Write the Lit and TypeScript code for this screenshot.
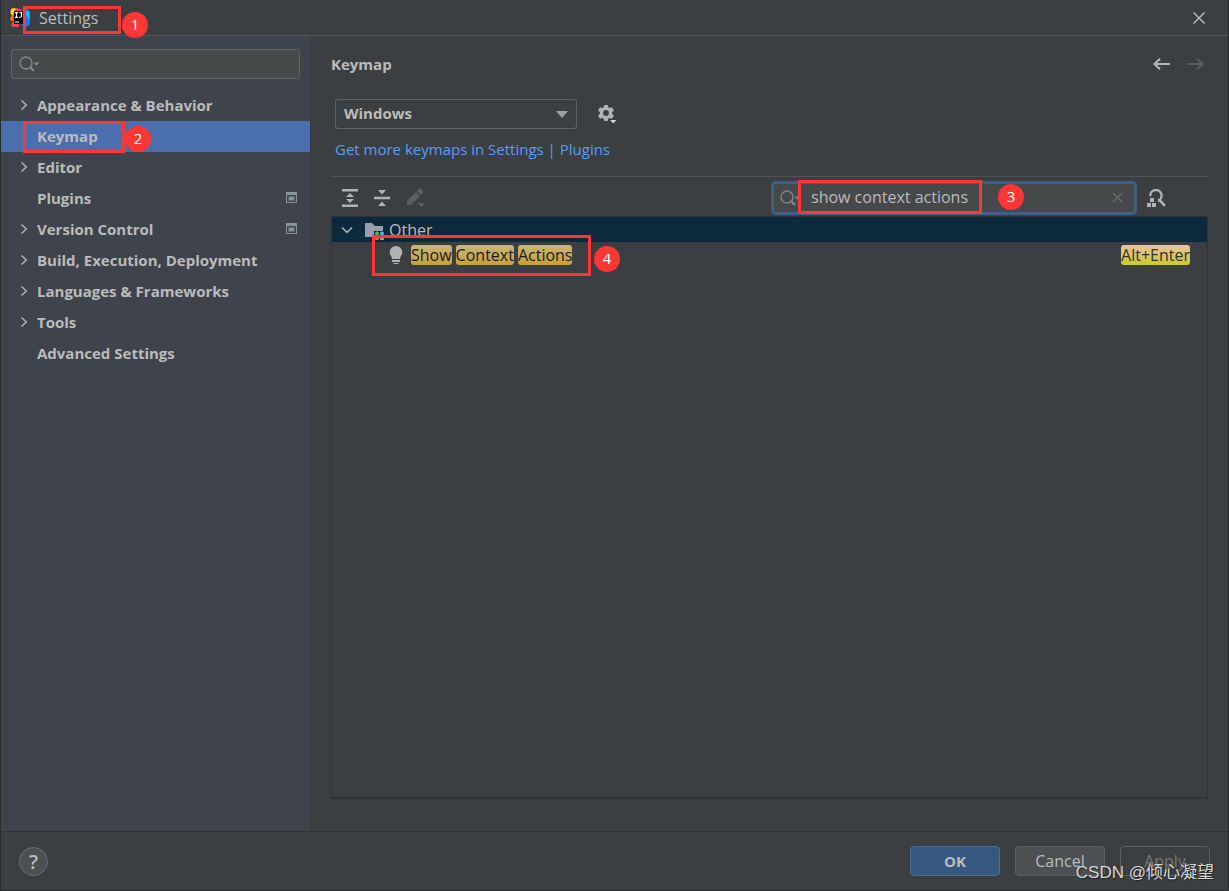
import { LitElement, html, svg, css, nothing } from "lit";
import { customElement, property, state } from "lit/decorators.js";

interface Section {
  label: string;
  expandable?: boolean;
  projectLevel?: boolean;
}

const SECTIONS: Section[] = [
  { label: "Appearance & Behavior", expandable: true },
  { label: "Keymap" },
  { label: "Editor", expandable: true },
  { label: "Plugins", projectLevel: true },
  { label: "Version Control", expandable: true, projectLevel: true },
  { label: "Build, Execution, Deployment", expandable: true },
  { label: "Languages & Frameworks", expandable: true },
  { label: "Tools", expandable: true },
  { label: "Advanced Settings" },
];

const ICONS = {
  logo: {
    w: 20,
    h: 20,
    body: svg`
      <path d="M1 1L6 0L11 2L8 19L1 18L3 14L0 11L2 7L0 5Z" fill="#fc801d"/>
      <path d="M3 5L7 0L13 2L9 19L2 18Z" fill="#fe2857" opacity=".8"/>
      <path d="M12 4L17 1L20 4V14L19 18L14 19L11 16Z" fill="#087cfa"/>
      <path d="M15 5L18 2L20 6L19 12Z" fill="#07c3f2"/>
      <path d="M1 1L5 0L3 8L1 6Z" fill="#ffd24a"/>
      <rect x="4" y="3" width="10" height="13" fill="#0b0508"/>
      <path d="M5 4.600H8M6.500 5V9.400M5 9.400H8M9.500 4.600H11.500V8.300Q11.500 9.400 9.200 9.400M5 14H9" stroke="#fff" stroke-width="1.200" fill="none"/>`,
  },
  close: { w: 12, h: 12, body: svg`<path d="M.5.5L11.500 11.500M11.500.5L.5 11.500" stroke="#c4c5c6" stroke-width="1.200" fill="none"/>` },
  search: {
    w: 21,
    h: 16,
    body: svg`
      <circle cx="7" cy="7" r="6" fill="none" stroke="#7c878f" stroke-width="1.400"/>
      <path d="M11 11L15 15" stroke="#7c878f" stroke-width="2.200"/>
      <path d="M14.500 6.500H20.500L17.500 9.800Z" fill="#7c878f"/>`,
  },
  right: { w: 8, h: 12, body: svg`<path d="M1.500 1.500L6.300 6L1.500 10.500" stroke="#adafb1" stroke-width="1.600" fill="none"/>` },
  down: { w: 12, h: 8, body: svg`<path d="M1 1.500L6 6.300L11 1.500" stroke="#adafb1" stroke-width="1.600" fill="none"/>` },
  project: {
    w: 11,
    h: 11,
    body: svg`
      <path d="M0 0H11V11H0ZM1 3V10H10V3Z" fill="#87939a" fill-rule="evenodd"/>
      <rect x="2" y="4" width="7" height="5" fill="#5b646c"/>
      <rect x="3" y="5" width="5" height="3" fill="#87939a"/>`,
  },
  back: { w: 17, h: 12, body: svg`<path d="M17 6H2M7 .8L1.600 6L7 11.200" stroke="#b4b6b8" stroke-width="2.200" fill="none"/>` },
  forward: { w: 17, h: 12, body: svg`<path d="M0 6H15M10 .8L15.400 6L10 11.200" stroke="#5b5d5f" stroke-width="2.200" fill="none"/>` },
  gear: {
    w: 19,
    h: 20,
    body: svg`
      <path fill="#afb1b3" fill-rule="evenodd" d="M6.200 1H9.800L10.300 3.300L11.600 4L14 3.300L15.900 6.500L14.100 8.200V9.800L15.900 11.500L14 14.700L11.600 14L10.300 14.700L9.800 17H6.200L5.700 14.700L4.400 14L2 14.700L.1 11.500L1.900 9.800V8.200L.1 6.500L2 3.300L4.400 4L5.700 3.300ZM8 6.100A2.900 2.900 0 1 0 8 11.900A2.900 2.900 0 1 0 8 6.100Z"/>
      <path d="M10.500 15H19V17L15 20L10.500 16Z" fill="#3c3f41"/>
      <path d="M12 16H18.500L15.250 19.500Z" fill="#d0d2d3"/>`,
  },
  expandAll: {
    w: 16,
    h: 18,
    body: svg`<path fill="#afb1b3" d="M0 0H16V2.500H0ZM0 15.500H16V18H0ZM8 4L12 8H4ZM4 10H12L8 14Z"/>`,
  },
  collapseAll: {
    w: 16,
    h: 16,
    body: svg`<path fill="#afb1b3" d="M0 6.800H16V9.200H0ZM4 0H12L8 4.500ZM8 11.500L12 16H4Z"/>`,
  },
  edit: {
    w: 19,
    h: 19,
    body: svg`
      <path fill="#5c5f61" d="M1 13L10 4L14 8L5 17H1ZM11 3L13 1Q14 .2 15 1L17 3Q17.800 4 17 5L15 7Z"/>
      <path fill="#5c5f61" d="M11.500 15H19L15.250 19Z"/>`,
  },
  clear: { w: 11, h: 11, body: svg`<path d="M.8.8L10.200 10.200M10.200.8L.8 10.200" stroke="#6e7375" stroke-width="1.200" fill="none"/>` },
  findShortcut: {
    w: 19,
    h: 18,
    body: svg`
      <path d="M3.400 7.200A5.600 5.600 0 1 1 11 11.800" fill="none" stroke="#afb1b3" stroke-width="2.400"/>
      <path d="M12.500 11L18 16.800" stroke="#afb1b3" stroke-width="2.600"/>
      <path fill="#afb1b3" d="M3 9H7V13H3ZM0 14H4V18H0ZM5 14H9V18H5Z"/>`,
  },
  folder: {
    w: 20,
    h: 18,
    body: svg`
      <path d="M0 1H7L10 4H18V15H0Z" fill="#95a0a8"/>
      <rect x="9" y="9" width="11" height="9" fill="#0d293e"/>
      <circle cx="12" cy="11.500" r="2" fill="#62b543"/>
      <circle cx="17" cy="11.500" r="2" fill="#40b6e0"/>
      <circle cx="12" cy="16.500" r="2" fill="#f26522"/>
      <circle cx="17" cy="16.500" r="2" fill="#9aa7b0"/>`,
  },
  bulb: {
    w: 14,
    h: 18,
    body: svg`<path fill="#afb1b3" d="M7 0A6.300 6.300 0 0 0 .7 6.300C.7 9 2.800 10.200 3 13H11C11.200 10.200 13.300 9 13.300 6.300A6.300 6.300 0 0 0 7 0ZM3 14H11V16H3ZM4.500 17H9.500V18H4.500Z"/>`,
  },
};

type IconName = keyof typeof ICONS;

@customElement("ui-icon")
export class UiIcon extends LitElement {
  @property() name: IconName = "close";

  static styles = css`
    :host {
      display: block;
      flex: none;
    }
    .glyph {
      display: block;
    }
  `;

  render() {
    const { w, h, body } = ICONS[this.name];
    return html`<svg class="glyph" width=${w} height=${h} viewBox="0 0 ${w} ${h}" aria-hidden="true">${body}</svg>`;
  }
}

@customElement("app-root")
export class AppRoot extends LitElement {
  @state() private selected = "Keymap";
  @state() private query = "show context actions";

  static styles = css`
    :host {
      display: flex;
      flex-direction: column;
      position: relative;
      box-sizing: border-box;
      height: 100vh;
      border: 1px solid #2b2b2b;
      border-top: 0;
      background: #3c3f41;
      color: #bbbbbb;
      font: 16px/20px "Open Sans", "Noto Sans", sans-serif;
      overflow: hidden;
    }
    * {
      box-sizing: border-box;
    }
    button,
    input,
    select {
      font: inherit;
      color: inherit;
      margin: 0;
      padding: 0;
      border: 0;
      background: none;
      outline: 0;
      appearance: none;
    }
    ul {
      list-style: none;
      margin: 0;
      padding: 0;
    }
    .titlebar {
      display: flex;
      align-items: center;
      position: relative;
      flex: none;
      height: 36px;
      padding: 0 23px 0 9px;
      gap: 9px;
      border-bottom: 1px solid #515355;
    }
    .title {
      flex: 1;
      margin: 0;
      font-size: 16px;
      font-weight: 400;
    }
    .body {
      display: flex;
      flex: 1;
      min-height: 0;
    }
    .sidebar {
      flex: none;
      width: 309px;
      padding-top: 13px;
      background: #3f434c;
    }
    .filter {
      display: flex;
      align-items: center;
      height: 30px;
      margin: 0 10px 11px;
      padding: 0 7px;
      gap: 6px;
      border: 1px solid #646464;
      border-radius: 3px;
      background: #45494a;
    }
    .filter-input {
      flex: 1;
      min-width: 0;
      height: 100%;
    }
    .section {
      position: relative;
    }
    .section-button {
      display: flex;
      align-items: center;
      width: 100%;
      height: 31px;
      padding: 0 13px 2px 19px;
      font-size: 15px;
      font-weight: 700;
      text-align: left;
    }
    .section-button.selected {
      background: #4b6eaf;
    }
    .section-arrow {
      width: 17px;
    }
    .section-label {
      flex: 1;
    }
    .content {
      display: flex;
      flex-direction: column;
      flex: 1;
      min-width: 0;
      padding: 18px 20px 32px 21px;
    }
    .heading-row {
      display: flex;
      align-items: center;
      gap: 17px;
      height: 20px;
      padding-right: 4px;
    }
    .heading {
      flex: 1;
      margin: 0;
      font-size: 15px;
      font-weight: 700;
    }
    .scheme {
      display: flex;
      align-items: center;
      gap: 21px;
      margin: 25px 0 0 4px;
    }
    .select-wrap {
      display: grid;
      align-items: center;
      width: 242px;
      height: 30px;
      border: 1px solid #646464;
      border-radius: 3px;
    }
    .select {
      grid-area: 1 / 1;
      height: 100%;
      padding: 0 8px 2px;
      font-size: 15px;
      font-weight: 700;
    }
    .select-arrow {
      grid-area: 1 / 1;
      justify-self: end;
      margin-right: 8px;
      border: 6px solid transparent;
      border-top: 7px solid #9da0a2;
      border-bottom: 0;
      pointer-events: none;
    }
    .link {
      align-self: flex-start;
      margin: 10px 0 17px 4px;
      color: #589df6;
      font-size: 15px;
      text-decoration: none;
    }
    .toolbar {
      display: flex;
      align-items: center;
      height: 40px;
      padding: 3px 42px 1px 11px;
      gap: 16px;
      border-top: 1px solid #515355;
    }
    .spacer {
      flex: 1;
    }
    .find {
      display: flex;
      align-items: center;
      position: relative;
      width: 366px;
      height: 34px;
      margin-right: -6px;
      padding: 0 11px 0 6px;
      border: 3px solid #3d6185;
      border-radius: 5px;
      background: #45494a;
    }
    .find-input {
      flex: 1;
      min-width: 0;
      height: 100%;
      padding: 0 0 2px 10px;
    }
    .tree {
      flex: 1;
      border: 1px solid #323232;
      border-bottom-width: 2px;
    }
    .tree-row {
      display: flex;
      align-items: center;
      position: relative;
      height: 25px;
    }
    .tree-row.group {
      padding-left: 9px;
      gap: 4px;
      background: #0d293e;
    }
    .tree-row.group .folder {
      margin: 3px 0 0 8px;
    }
    .tree-row.action {
      padding: 0 17px 0 57px;
    }
    .action-name {
      display: flex;
      flex: 1;
      gap: 4px;
      margin-left: 8px;
    }
    .hit {
      border-radius: 3px;
      background: linear-gradient(#c9b47a, #c4a23a);
      color: #1c1c1c;
    }
    .shortcut {
      border-radius: 3px;
      background: linear-gradient(#e8c3a0, #cdc92c);
      color: #333333;
      font: inherit;
    }
    .footer {
      display: flex;
      align-items: center;
      flex: none;
      gap: 15px;
      height: 59px;
      padding: 0 18px;
      border-top: 1px solid #323232;
    }
    .help {
      width: 29px;
      height: 29px;
      margin-right: auto;
      border: 1px solid #6a6d6f;
      border-radius: 15px;
      background: #4c5052;
      font-size: 20px;
      font-weight: 600;
      line-height: 27px;
    }
    .button {
      width: 90px;
      height: 30px;
      border: 1px solid #5e6060;
      border-radius: 4px;
      background: #4c5052;
    }
    .button.primary {
      border-color: #4c708c;
      background: #365880;
      font-size: 15px;
      font-weight: 700;
    }
    .button:disabled {
      background: none;
      color: #777777;
    }
    .outline {
      position: absolute;
      border: 3px solid #fd3636;
      pointer-events: none;
    }
    .step {
      position: absolute;
      width: 26px;
      height: 26px;
      border-radius: 13px;
      background: #fd3636;
      color: #ffffff;
      font-size: 15px;
      font-weight: 400;
      line-height: 25px;
      text-align: center;
      pointer-events: none;
    }
    .outline.title-mark {
      left: 22px;
      top: 6px;
      width: 98px;
      height: 28px;
    }
    .step.title-mark {
      left: 121px;
      top: 12px;
      z-index: 1;
    }
    .outline.section-mark {
      left: 22px;
      top: 0;
      width: 102px;
      height: 32px;
      z-index: 1;
    }
    .step.section-mark {
      left: 124px;
      top: 5px;
      z-index: 1;
    }
    .outline.find-mark {
      left: 24px;
      top: -4px;
      width: 184px;
      height: 34px;
    }
    .step.find-mark {
      left: 224px;
      top: 0;
    }
    .outline.action-mark {
      left: 40px;
      top: -7px;
      width: 219px;
      height: 41px;
    }
    .step.action-mark {
      left: 262px;
      top: 4px;
    }
    .watermark {
      position: absolute;
      right: 14px;
      bottom: 5px;
      color: #d6d6d6;
      font: 17px/24px "Liberation Sans", "Noto Sans CJK SC", sans-serif;
      text-shadow: 1px 1px 1px #222222;
      pointer-events: none;
    }
  `;

  private mark(kind: string, step: number) {
    return html`<span class="outline ${kind}"></span><span class="step ${kind}">${step}</span>`;
  }

  private renderSection(section: Section) {
    const active = section.label === this.selected;
    return html`<li class="section">
      <button class="section-button ${active ? "selected" : ""}" @click=${() => (this.selected = section.label)}>
        <span class="section-arrow">${section.expandable ? html`<ui-icon name="right"></ui-icon>` : nothing}</span>
        <span class="section-label">${section.label}</span>
        ${section.projectLevel ? html`<ui-icon name="project"></ui-icon>` : nothing}
      </button>
      ${section.label === "Keymap" ? this.mark("section-mark", 2) : nothing}
    </li>`;
  }

  render() {
    return html`
      <header class="titlebar">
        <ui-icon name="logo"></ui-icon>
        <h1 class="title">Settings</h1>
        <button aria-label="Close"><ui-icon name="close"></ui-icon></button>
        ${this.mark("title-mark", 1)}
      </header>

      <div class="body">
        <nav class="sidebar">
          <label class="filter">
            <ui-icon name="search"></ui-icon>
            <input class="filter-input" type="text" aria-label="Search settings" />
          </label>
          <ul>${SECTIONS.map((s) => this.renderSection(s))}</ul>
        </nav>

        <main class="content">
          <div class="heading-row">
            <h2 class="heading">Keymap</h2>
            <button aria-label="Back"><ui-icon name="back"></ui-icon></button>
            <button aria-label="Forward" disabled><ui-icon name="forward"></ui-icon></button>
          </div>
          <div class="scheme">
            <div class="select-wrap">
              <select class="select" aria-label="Keymap scheme"><option>Windows</option></select>
              <span class="select-arrow"></span>
            </div>
            <button aria-label="Scheme actions"><ui-icon name="gear"></ui-icon></button>
          </div>
          <a class="link" href="#plugins">Get more keymaps in Settings | Plugins</a>

          <div class="toolbar">
            <button aria-label="Expand all"><ui-icon name="expandAll"></ui-icon></button>
            <button aria-label="Collapse all"><ui-icon name="collapseAll"></ui-icon></button>
            <button aria-label="Edit shortcut" disabled><ui-icon name="edit"></ui-icon></button>
            <span class="spacer"></span>
            <div class="find">
              <ui-icon name="search"></ui-icon>
              <input
                class="find-input"
                type="text"
                aria-label="Search actions"
                .value=${this.query}
                @input=${(e: Event) => (this.query = (e.target as HTMLInputElement).value)}
              />
              <button aria-label="Clear" @click=${() => (this.query = "")}><ui-icon name="clear"></ui-icon></button>
              ${this.mark("find-mark", 3)}
            </div>
            <button aria-label="Find by shortcut"><ui-icon name="findShortcut"></ui-icon></button>
          </div>

          <ul class="tree">
            <li class="tree-row group">
              <ui-icon name="down"></ui-icon>
              <ui-icon class="folder" name="folder"></ui-icon>
              <span>Other</span>
            </li>
            <li class="tree-row action">
              <ui-icon name="bulb"></ui-icon>
              <span class="action-name">
                ${["Show", "Context", "Actions"].map((w) => html`<span class="hit">${w}</span>`)}
              </span>
              <kbd class="shortcut">Alt+Enter</kbd>
              ${this.mark("action-mark", 4)}
            </li>
          </ul>
        </main>
      </div>

      <footer class="footer">
        <button class="help" aria-label="Help">?</button>
        <button class="button primary">OK</button>
        <button class="button">Cancel</button>
        <button class="button" disabled>Apply</button>
      </footer>
      <span class="watermark">CSDN @倾心凝望</span>
    `;
  }
}
